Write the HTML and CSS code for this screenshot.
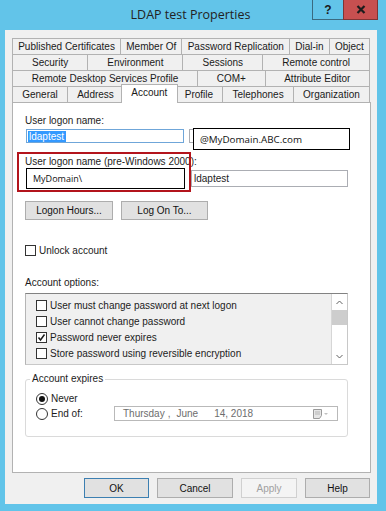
FILE: index.html
```html
<!DOCTYPE html>
<html>
<head>
<meta charset="utf-8">
<title>LDAP test Properties</title>
<link rel="stylesheet" href="styles.css">
</head>
<body>
<div class="window">
  <div class="titlebar">
    <div></div>
    <div class="title">LDAP test Properties</div>
    <div class="caption">
      <div class="cap-help">?</div>
      <div class="cap-close">
        <svg width="10" height="9" viewBox="0 0 10 9"><path d="M1.5 1 L8.5 8 M8.5 1 L1.5 8" stroke="#1c1c1c" stroke-width="2.2" fill="none"/></svg>
      </div>
    </div>
  </div>
  <div class="client">
    <div class="tabs">
      <div class="tabrow">
        <div class="tab">Published Certificates</div>
        <div class="tab">Member Of</div>
        <div class="tab">Password Replication</div>
        <div class="tab">Dial-in</div>
        <div class="tab">Object</div>
      </div>
      <div class="tabrow">
        <div class="tab">Security</div>
        <div class="tab">Environment</div>
        <div class="tab">Sessions</div>
        <div class="tab">Remote control</div>
      </div>
      <div class="tabrow">
        <div class="tab">Remote Desktop Services Profile</div>
        <div class="tab">COM+</div>
        <div class="tab">Attribute Editor</div>
      </div>
      <div class="tabrow">
        <div class="tab">General</div>
        <div class="tab">Address</div>
        <div class="tab sel">Account</div>
        <div class="tab">Profile</div>
        <div class="tab">Telephones</div>
        <div class="tab">Organization</div>
      </div>
    </div>

    <div class="panel">
      <div class="lbl">User logon name:</div>
      <div class="row1">
        <div class="input in-user"><span class="selected">ldaptest</span></div>
        <div class="input combo"></div>
      </div>
      <div class="lbl lbl2">User logon name (pre-Windows 2000):</div>
      <div class="row2">
        <div class="input in-pre"></div>
        <div class="input in-sam">ldaptest</div>
      </div>
      <div class="btnrow">
        <div class="btn btn-hours">Logon Hours...</div>
        <div class="btn btn-logon">Log On To...</div>
      </div>
      <div class="checkrow unlock">
        <div class="chk"></div>
        <span>Unlock account</span>
      </div>
      <div class="lbl lbl3">Account options:</div>
      <div class="listbox">
        <div class="items">
          <div class="item"><div class="chk"></div><span>User must change password at next logon</span></div>
          <div class="item"><div class="chk"></div><span>User cannot change password</span></div>
          <div class="item"><div class="chk checked"><svg width="9" height="9" viewBox="0 0 9 9"><polyline points="1.5,4.5 3.5,7 7.5,1.5" stroke="#1a1a1a" stroke-width="1.5" fill="none"/></svg></div><span>Password never expires</span></div>
          <div class="item"><div class="chk"></div><span>Store password using reversible encryption</span></div>
        </div>
        <div class="scroll">
          <div class="sarrow"><svg width="7" height="5" viewBox="0 0 7 5"><polyline points="0.5,4 3.5,1 6.5,4" stroke="#606060" stroke-width="1" fill="none"/></svg></div>
          <div class="thumb"></div>
          <div class="strack"></div>
          <div class="sarrow"><svg width="7" height="5" viewBox="0 0 7 5"><polyline points="0.5,1 3.5,4 6.5,1" stroke="#606060" stroke-width="1" fill="none"/></svg></div>
        </div>
      </div>
      <fieldset class="group">
        <legend>Account expires</legend>
        <div class="radiorow">
          <div class="radio on"><div class="dot"></div></div>
          <span>Never</span>
        </div>
        <div class="radiorow">
          <div class="rlabel">
            <div class="radio"></div>
            <span>End of:</span>
          </div>
          <div class="datepick">
            <span class="d-day">Thursday</span><span class="d-comma">,</span><span class="d-month">June</span><span class="d-date">14, 2018</span>
            <span class="d-icon">
              <svg width="16" height="10" viewBox="0 0 16 10"><path d="M0.5 0.5 H8.5 V6.5 L6.5 9.5 H0.5 Z" fill="#e6e6e6" stroke="#9a9a9a"/><path d="M2 3 H7 M2 5 H7" stroke="#b5b5b5"/><path d="M11 4 L15 4 L13 6 Z" fill="#c0c0c0"/></svg>
            </span>
          </div>
        </div>
      </fieldset>

      <div class="note note-upn">@MyDomain.ABC.com</div>
      <div class="note-red"></div>
      <div class="note note-pre">MyDomain\</div>
    </div>

    <div class="footer">
      <div class="btn fbtn ok">OK</div>
      <div class="btn fbtn cancel">Cancel</div>
      <div class="btn fbtn apply">Apply</div>
      <div class="btn fbtn help">Help</div>
    </div>
  </div>
</div>
</body>
</html>
```
FILE: styles.css
```css
* { box-sizing: border-box; }
html, body { margin: 0; padding: 0; }
body {
  width: 386px;
  height: 511px;
  overflow: hidden;
  background: #62c4e9;
  font-family: "Liberation Sans", Arial, sans-serif;
  font-size: 10px;
  color: #1c1c1c;
}
.window { height: 511px; display: flex; flex-direction: column; }

.titlebar {
  height: 30px;
  flex: none;
  display: grid;
  grid-template-columns: 1fr auto 1fr;
}
.title {
  font-family: "Open Sans", sans-serif;
  font-size: 12.5px;
  line-height: 30px;
  color: #222;
  padding-right: 5px;
  white-space: nowrap;
}
.caption {
  justify-self: end;
  align-self: start;
  display: flex;
  height: 20px;
  margin-right: 8px;
}
.cap-help {
  width: 31px;
  height: 20px;
  border-left: 1px solid #3a6a80;
  border-bottom: 1px solid #3a6a80;
  display: flex;
  align-items: center;
  justify-content: center;
  font-weight: bold;
  font-size: 12px;
  color: #1a1a1a;
}
.cap-close {
  width: 35px;
  height: 20px;
  background: #c75050;
  border-bottom: 1px solid #7e3434;
  border-right: 1px solid #7e3434;
  border-left: 1px solid #7e3434;
  display: flex;
  align-items: center;
  justify-content: center;
}

.client {
  flex: 1;
  margin: 0 9px 7px 5px;
  background: #f0f0f0;
  padding: 8px 6px 0 7px;
  display: flex;
  flex-direction: column;
}

.tabs { flex: none; margin-right: 2px; }
.tabrow { display: flex; height: 16px; }
.tab {
  flex: 1 1 auto;
  height: 16px;
  border: 1px solid #b2b2b2;
  border-bottom: none;
  margin-right: -1px;
  padding: 0 4px;
  background: #f0f0f0;
  text-align: center;
  line-height: 15px;
  white-space: nowrap;
  color: #1a1a1a;
}
.tab.sel {
  background: #fff;
  height: 19px;
  margin: -2px -3px -1px -2px;
  z-index: 1;
}

.panel {
  flex: none;
  position: relative;
  width: 359px;
  height: 371px;
  background: #fff;
  border: 1px solid #b2b2b2;
  padding: 11px 0 0 12px;
}
.lbl { height: 14px; line-height: 14px; white-space: nowrap; }
.input {
  border: 1px solid #abadb3;
  background: #fff;
  height: 100%;
  white-space: nowrap;
}
.row1 { display: flex; margin-top: 1px; height: 14px; }
.in-user { margin-left: 1px; width: 158px; border-color: #6fa6d9; padding: 1px 0 0 1px; line-height: 11px; }
.selected { display: inline-block; background: #3399ff; color: #fff; padding: 0 2px 0 1px; height: 11px; line-height: 11px; }
.combo { margin-left: 5px; width: 159px; }

.lbl2 { margin-top: 12px; }
.row2 { display: flex; margin-top: 1px; height: 17px; }
.in-pre { margin-left: 1px; width: 159px; }
.in-sam { margin-left: 6px; width: 157px; padding-left: 2px; line-height: 15px; }

.btnrow { display: flex; gap: 8px; margin-top: 14px; height: 19px; }
.btn {
  height: 19px;
  border: 1px solid #adadad;
  background: #e1e1e1;
  display: flex;
  align-items: center;
  justify-content: center;
  white-space: nowrap;
  color: #111;
}
.btn-hours { width: 88px; }
.btn-logon { width: 87px; }

.checkrow { display: flex; align-items: center; gap: 3px; height: 12px; }
.unlock { margin-top: 24px; }
.chk {
  width: 11px;
  height: 11px;
  flex: none;
  border: 1px solid #333;
  background: #fff;
  display: flex;
  align-items: center;
  justify-content: center;
}

.lbl3 { margin-top: 20px; }
.listbox {
  margin-top: 3px;
  width: 323px;
  height: 72px;
  border: 1px solid #8a8a8a;
  border-color: #828282 #c8c8c8 #c8c8c8 #b5b5b5;
  background: #f0f0f0;
  display: flex;
}
.items { flex: 1; padding: 3px 0 0 10px; }
.item { display: flex; align-items: center; gap: 3px; height: 16px; white-space: nowrap; }
.scroll {
  width: 16px;
  flex: none;
  background: #fff;
  border-left: 1px solid #d6d6d6;
  display: flex;
  flex-direction: column;
}
.sarrow { height: 16px; display: flex; align-items: center; justify-content: center; }
.thumb { height: 15px; background: #cdcdcd; }
.strack { flex: 1; }

.group {
  margin: 7px 0 0 0;
  width: 323px;
  border: 1px solid #dadada;
  border-radius: 3px;
  padding: 5px 0 15px 10px;
  min-width: 0;
}
.group legend {
  margin-left: -6px;
  padding: 0 2px;
  height: 14px;
  line-height: 14px;
  font-size: 10px;
}
.radiorow { display: flex; align-items: center; height: 15px; gap: 3px; white-space: nowrap; }
.rlabel { display: flex; align-items: center; gap: 3px; width: 78px; }
.radio {
  width: 12px;
  height: 12px;
  flex: none;
  border: 1px solid #333;
  border-radius: 50%;
  background: #fff;
  display: flex;
  align-items: center;
  justify-content: center;
}
.dot { width: 6px; height: 6px; border-radius: 50%; background: #111; }
.datepick {
  margin-left: -3px;
  width: 224px;
  height: 15px;
  border: 1px solid #b9b9b9;
  background: #fff;
  color: #6d6d6d;
  display: flex;
  align-items: center;
  padding-left: 8px;
}
.d-comma { margin-left: 3px; }
.d-month { margin-left: 6px; }
.d-date { margin-left: 16px; }
.d-icon { margin-left: auto; margin-right: 8px; display: flex; }

.note {
  position: absolute;
  background: #fff;
  border: 1px solid #000;
  font-family: "Open Sans", sans-serif;
  color: #111;
  display: flex;
  align-items: center;
  white-space: nowrap;
}
.note-upn { left: 180px; top: 25px; width: 157px; height: 22px; padding-left: 6px; font-size: 9.8px; }
.note-red {
  position: absolute;
  left: 4px;
  top: 49px;
  width: 174px;
  height: 40px;
  border: 2.5px solid #b3141c;
}
.note-pre { left: 13px; top: 65px; width: 159px; height: 21px; padding-left: 6px; font-size: 9px; }

.footer {
  display: flex;
  justify-content: flex-end;
  gap: 8px;
  margin-top: 5px;
  padding-right: 1px;
}
.fbtn { height: 20px; }
.ok { width: 65px; border-color: #3c7fb1; }
.cancel { width: 76px; }
.apply { width: 56px; background: #f4f4f4; border-color: #d0d0d0; color: #a0a0a0; }
.help { width: 65px; }
```
